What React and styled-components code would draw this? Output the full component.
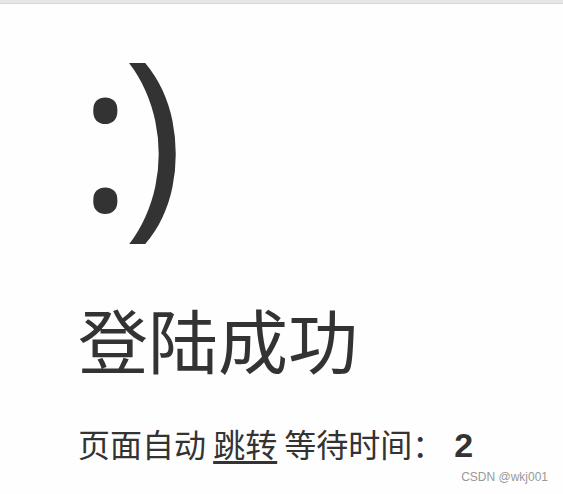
import React from 'react'
import styled, { createGlobalStyle } from 'styled-components'

const GlobalStyle = createGlobalStyle`
    html, body {
        margin: 0;
        padding: 0;
        background: #fefefe;
    }
`

const Page = styled.div`
    position: relative;
    width: 563px;
    height: 494px;
    overflow: hidden;
    background: #fefefe;
    border-top: 3px solid #e6e6e6;
    box-shadow: inset 0 1px 0 #d6d6d6;
    box-sizing: border-box;
    font-family: "Noto Sans CJK SC", "Noto Sans", sans-serif;
    color: #333;
`

const Message = styled.div`
    padding: 0 0 0 78px;
`

const Smile = styled.h1`
    margin: 0;
    font-family: "Open Sans", sans-serif;
    font-weight: normal;
    font-size: 208px;
    line-height: 256px;
    color: #333;
    letter-spacing: -10px;
`

const Title = styled.p`
    margin: 37px 0 0;
    font-size: 70px;
    line-height: 86px;
    letter-spacing: 0;
    color: #333;
`

const Jump = styled.p`
    margin: 41px 0 0;
    font-size: 32px;
    line-height: 40px;
    color: #333;
`

const JumpLink = styled.a`
    color: #333;
    text-decoration: underline;
    text-underline-offset: 4px;
`

const Wait = styled.b`
    margin-left: 10px;
    font-family: "Liberation Sans", sans-serif;
    font-size: 34px;
    font-weight: bold;
`

const Watermark = styled.span`
    position: absolute;
    right: 15px;
    bottom: 10px;
    font-family: "Liberation Sans", sans-serif;
    font-size: 12px;
    color: #999;
`

const App = () => {
    return (
        <Page>
            <GlobalStyle />
            <Message>
                <Smile>:)</Smile>
                <Title>登陆成功</Title>
                <Jump>
                    页面自动 <JumpLink href="#">跳转</JumpLink> 等待时间：<Wait>2</Wait>
                </Jump>
            </Message>
            <Watermark>CSDN @wkj001</Watermark>
        </Page>
    )
}

export default App
